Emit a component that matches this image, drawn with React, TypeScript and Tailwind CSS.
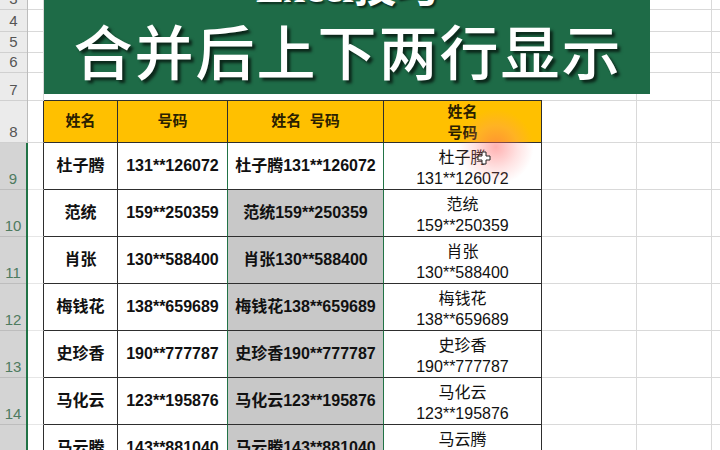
import React from "react"

type Person = { name: string; phone: string }

const people: Person[] = [
  { name: "杜子腾", phone: "131**126072" },
  { name: "范统", phone: "159**250359" },
  { name: "肖张", phone: "130**588400" },
  { name: "梅钱花", phone: "138**659689" },
  { name: "史珍香", phone: "190**777787" },
  { name: "马化云", phone: "123**195876" },
  { name: "马云腾", phone: "143**881040" },
]

const topRows = [
  { n: 3, h: "h-[21px]" },
  { n: 4, h: "h-[22px]" },
  { n: 5, h: "h-[21px]" },
  { n: 6, h: "h-[20px]" },
  { n: 7, h: "h-[28px]" },
]

const light = "border-[#d9d9d9]"

// plain gridline cells to the right of the table
const RightCells = () => (
  <>
    <div className={`w-[95px] shrink-0 border-r border-b ${light}`} />
    <div className={`w-[75px] shrink-0 border-r border-b ${light}`} />
    <div className={`flex-1 border-b ${light}`} />
  </>
)

const RowHead = ({ n, h, selected }: { n: number; h: string; selected?: boolean }) => (
  <div
    className={`${h} shrink-0 flex items-end justify-center pb-[1px] border-b text-[15px] leading-[18px] ${
      selected
        ? "bg-[#d4d4d4] border-[#bdbdbd] text-[#4e7b60]"
        : "bg-[#ebebeb] border-[#d0d0d0] text-[#555]"
    }`}
  >
    {n}
  </div>
)

export default function App() {
  return (
    <div className="w-[720px] h-[450px] overflow-hidden bg-white font-['Liberation_Sans','Noto_Sans_CJK_SC',sans-serif] text-[#111]">
      <div className="flex -mt-[11px]">
        {/* row headers */}
        <div className="w-[28px] shrink-0 flex flex-col">
          <div className="flex flex-col border-r border-[#bcbcbc]">
            {topRows.map(r => <RowHead key={r.n} n={r.n} h={r.h} />)}
            <RowHead n={8} h="h-[42px]" />
          </div>
          <div className="flex flex-col border-r-2 border-[#217346]">
            {people.map((p, i) => <RowHead key={p.name} n={9 + i} h="h-[47px]" selected />)}
          </div>
        </div>

        {/* sheet */}
        <div className="relative flex-1 flex flex-col">
          {topRows.map((r, idx) => (
            <div key={r.n} className={`${r.h} flex`}>
              <div className={`w-[16px] shrink-0 border-r border-b ${light}`} />
              <div className={`w-[498px] shrink-0 border-b ${idx === topRows.length - 1 ? "border-[#2e2e2e]" : light}`} />
              <RightCells />
            </div>
          ))}

          {/* header row 8 */}
          <div className="h-[42px] flex text-[15px] font-semibold text-[#2a2000]">
            <div className="w-[16px] shrink-0 border-r border-b border-r-[#2e2e2e] border-b-[#d9d9d9]" />
            <div className="w-[74px] shrink-0 bg-[#ffc000] border-r border-b border-[#2e2e2e] flex items-center justify-center">姓名</div>
            <div className="w-[110px] shrink-0 bg-[#ffc000] border-r border-b border-[#2e2e2e] flex items-center justify-center">号码</div>
            <div className="w-[156px] shrink-0 bg-[#ffc000] border-r border-b border-[#2e2e2e] flex items-center justify-center whitespace-pre">姓名  号码</div>
            <div className="w-[158px] shrink-0 bg-[#ffc000] border-r border-b border-[#2e2e2e] flex flex-col items-center justify-center leading-[21px]">
              <span>姓名</span>
              <span>号码</span>
            </div>
            <RightCells />
          </div>

          {/* data rows */}
          {people.map((p, i) => (
            <div key={p.name} className="h-[47px] flex text-[16px]">
              <div className="w-[16px] shrink-0 border-r border-b border-r-[#2e2e2e] border-b-[#e6e6e6]" />
              <div className="w-[74px] shrink-0 border-r border-b border-[#2e2e2e] flex items-center justify-center font-semibold">{p.name}</div>
              <div className="w-[110px] shrink-0 border-r border-b border-r-[#217346] border-b-[#2e2e2e] flex items-center justify-center font-semibold">{p.phone}</div>
              <div
                className={`w-[156px] shrink-0 border-r border-b border-r-[#217346] border-b-[#2e2e2e] flex items-center justify-center font-semibold ${
                  i === 0 ? "bg-white" : "bg-[#c8c8c8]"
                }`}
              >
                {p.name + p.phone}
              </div>
              <div className="w-[158px] shrink-0 border-r border-b border-[#2e2e2e] flex flex-col items-center justify-center pt-[4px] leading-[21px]">
                <span>{p.name}</span>
                <span>{p.phone}</span>
              </div>
              <RightCells />
            </div>
          ))}

          {/* floating title shape */}
          <div className="absolute left-[16px] top-[11px] w-[606px] h-[94px] bg-[#1e6b47] overflow-hidden flex flex-col items-center text-white font-['Noto_Sans_CJK_SC',sans-serif]">
            <div className="-mt-[34px] h-[44px] leading-[44px] text-[42px] font-bold font-['Liberation_Serif','Noto_Sans_CJK_SC',serif] [text-shadow:2px_2px_2px_rgba(0,0,0,0.6)]">
              Excel技巧
            </div>
            <div className="mt-[7px] h-[66px] leading-[66px] text-[59px] font-medium tracking-[2px] pl-[2px] [text-shadow:3px_3px_3px_rgba(0,0,0,0.65)]">
              合并后上下两行显示
            </div>
          </div>

          {/* cursor highlight */}
          <div className="absolute left-[430px] top-[120px] w-[76px] h-[76px] rounded-full bg-[radial-gradient(circle,rgba(255,100,100,0.5)_0%,rgba(255,140,140,0.25)_40%,rgba(255,160,160,0)_70%)]" />
          <svg className="absolute left-[449px] top-[162px]" width="14" height="14" viewBox="0 0 14 14">
            <path d="M5 1h4v4h4v4H9v4H5V9H1V5h4z" fill="white" stroke="#222" strokeWidth="1" />
          </svg>
        </div>
      </div>
    </div>
  )
}
